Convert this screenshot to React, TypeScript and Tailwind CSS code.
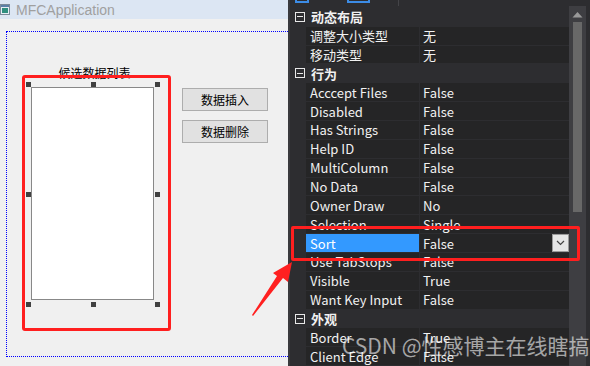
import React from "react";

type Row =
  | { kind: "header"; label: string }
  | { kind: "prop"; name: string; value: string; selected?: boolean };

const rows: Row[] = [
  { kind: "header", label: "动态布局" },
  { kind: "prop", name: "调整大小类型", value: "无" },
  { kind: "prop", name: "移动类型", value: "无" },
  { kind: "header", label: "行为" },
  { kind: "prop", name: "Acccept Files", value: "False" },
  { kind: "prop", name: "Disabled", value: "False" },
  { kind: "prop", name: "Has Strings", value: "False" },
  { kind: "prop", name: "Help ID", value: "False" },
  { kind: "prop", name: "MultiColumn", value: "False" },
  { kind: "prop", name: "No Data", value: "False" },
  { kind: "prop", name: "Owner Draw", value: "No" },
  { kind: "prop", name: "Selection", value: "Single" },
  { kind: "prop", name: "Sort", value: "False", selected: true },
  { kind: "prop", name: "Use TabStops", value: "False" },
  { kind: "prop", name: "Visible", value: "True" },
  { kind: "prop", name: "Want Key Input", value: "False" },
  { kind: "header", label: "外观" },
  { kind: "prop", name: "Border", value: "True" },
  { kind: "prop", name: "Client Edge", value: "False" },
];

const handles: [number, number][] = [
  [26, 82],
  [91, 82],
  [155, 82],
  [26, 192],
  [155, 192],
  [26, 302],
  [91, 302],
  [155, 302],
];

function MinusBox() {
  return (
    <div className="w-[10px] h-[10px] border border-[#e8e8e8] flex items-center justify-center">
      <div className="w-[6px] h-[1px] bg-[#e8e8e8]" />
    </div>
  );
}

export default function App() {
  return (
    <div
      className="relative w-[590px] h-[366px] flex overflow-hidden"
      style={{ fontFamily: '"Noto Sans CJK SC", "Noto Sans", sans-serif' }}
    >
      {/* Left: dialog designer */}
      <div className="w-[288px] h-full flex flex-col bg-[#f0f0f0] shrink-0">
        <div className="h-[19px] bg-[#dce6f3] flex items-center gap-[6px]">
          <div className="w-[10px] h-[11px] border border-[#7a8a99] bg-[#e6eef5] flex flex-col">
            <div className="h-[2px] bg-[#5b7fa6]" />
            <div className="flex-1 m-[1px] bg-[#2f8f7f]" />
          </div>
          <span
            className="text-[14px] text-[#a0a0a0] leading-none"
            style={{ fontFamily: '"Liberation Sans", Arial, sans-serif' }}
          >
            MFCApplication
          </span>
        </div>
        <div className="flex-1 pt-[12px] pl-[6px]">
          <div className="h-[326px] border-t border-l border-b border-dotted border-[#0000ff] flex pl-[24px] pt-[33px]">
            <div className="flex flex-col items-center w-[123px]">
              <div className="text-[12px] leading-[16px] text-black ml-[4px]">候选数据列表</div>
              <div className="mt-[6px] w-[123px] h-[213px] bg-white border border-[#888888]" />
            </div>
            <div className="ml-[28px] mt-[23px] flex flex-col gap-[9px]">
              <div className="w-[86px] h-[23px] bg-[#e1e1e1] border border-[#adadad] flex items-center justify-center text-[12px] text-black">
                数据插入
              </div>
              <div className="w-[86px] h-[23px] bg-[#e1e1e1] border border-[#adadad] flex items-center justify-center text-[12px] text-black">
                数据删除
              </div>
            </div>
          </div>
        </div>
      </div>

      {/* Right: property grid */}
      <div className="flex-1 h-full bg-[#2d2d30] flex border-l-[2px] border-[#3a3a3d]">
        <div className="flex-1 flex flex-col">
          <div className="h-[8px] flex items-start">
            <div className="ml-[5px] w-[14px] h-[3px] border-b-[2px] border-x-[2px] border-[#3c8ce6]" />
            <div className="ml-[38px] w-[23px] h-[3px] border-b-[2px] border-x-[2px] border-[#3c8ce6]" />
            <div className="ml-[28px] w-[1px] h-[6px] bg-[#444448]" />
          </div>
          {rows.map((r, i) =>
            r.kind === "header" ? (
              <div key={i} className="h-[18px] mb-[1px] flex items-center">
                <div className="ml-[5px]">
                  <MinusBox />
                </div>
                <span className="ml-[6px] text-[13px] font-bold text-[#f1f1f1] leading-none">
                  {r.label}
                </span>
              </div>
            ) : (
              <div key={i} className="h-[18px] mb-[1px] flex">
                <div className="w-[16px]" />
                <div
                  className={
                    r.selected
                      ? "w-[113px] bg-[#3399ff] text-white flex items-center pl-[4px] text-[13px] leading-none"
                      : "w-[113px] bg-[#252526] text-[#f1f1f1] flex items-center pl-[4px] text-[13px] leading-none"
                  }
                >
                  {r.name}
                </div>
                <div className="ml-[1px] flex-1 bg-[#252526] text-[#f1f1f1] flex items-center pl-[3px] text-[13px] leading-none">
                  <span className="flex-1">{r.value}</span>
                  {r.selected ? (
                    <div className="w-[17px] h-[18px] bg-[#e6e6e6] border border-[#9a9a9a] flex items-center justify-center">
                      <svg width="9" height="6" viewBox="0 0 9 6">
                        <path d="M1 1 L4.5 4.5 L8 1" stroke="#444" strokeWidth="1.2" fill="none" />
                      </svg>
                    </div>
                  ) : null}
                </div>
              </div>
            )
          )}
        </div>
        <div className="w-[17px] mt-[6px] bg-[#3e3e42] flex flex-col items-center">
          <svg width="11" height="8" viewBox="0 0 11 8" className="mt-[5px]">
            <path d="M0.5 6.5 L5.5 1 L10.5 6.5 Z" fill="#999999" />
          </svg>
          <div className="mt-[3px] w-[9px] h-[190px] bg-[#686868]" />
        </div>
        <div className="w-[4px]" />
      </div>

      {/* Overlays: selection handles */}
      {handles.map(([x, y], i) => (
        <div
          key={i}
          className="absolute w-[5px] h-[5px] bg-[#404040]"
          style={{ left: x, top: y }}
        />
      ))}

      {/* Red annotation boxes */}
      <div className="absolute left-[22px] top-[75px] w-[149px] h-[256px] border-[3px] border-[#ff1f1f] rounded-[3px]" />
      <div className="absolute left-[291px] top-[226px] w-[289px] h-[35px] border-[3px] border-[#ff1f1f] rounded-[2px]" />

      {/* Red arrow */}
      <svg className="absolute left-0 top-0 pointer-events-none" width="590" height="366" viewBox="0 0 590 366">
        <polygon
          points="252,315 277,276 273,273 292,262 288,282 283,278 253,316"
          fill="#ff2020"
        />
      </svg>

      {/* Watermark */}
      <div
        className="absolute left-[342px] top-[331px] text-[21px] leading-[28px] text-white/60 whitespace-nowrap"
        style={{ fontFamily: '"Noto Sans CJK SC", "Noto Sans", sans-serif' }}
      >
        CSDN @性感博主在线瞎搞
      </div>
    </div>
  );
}
